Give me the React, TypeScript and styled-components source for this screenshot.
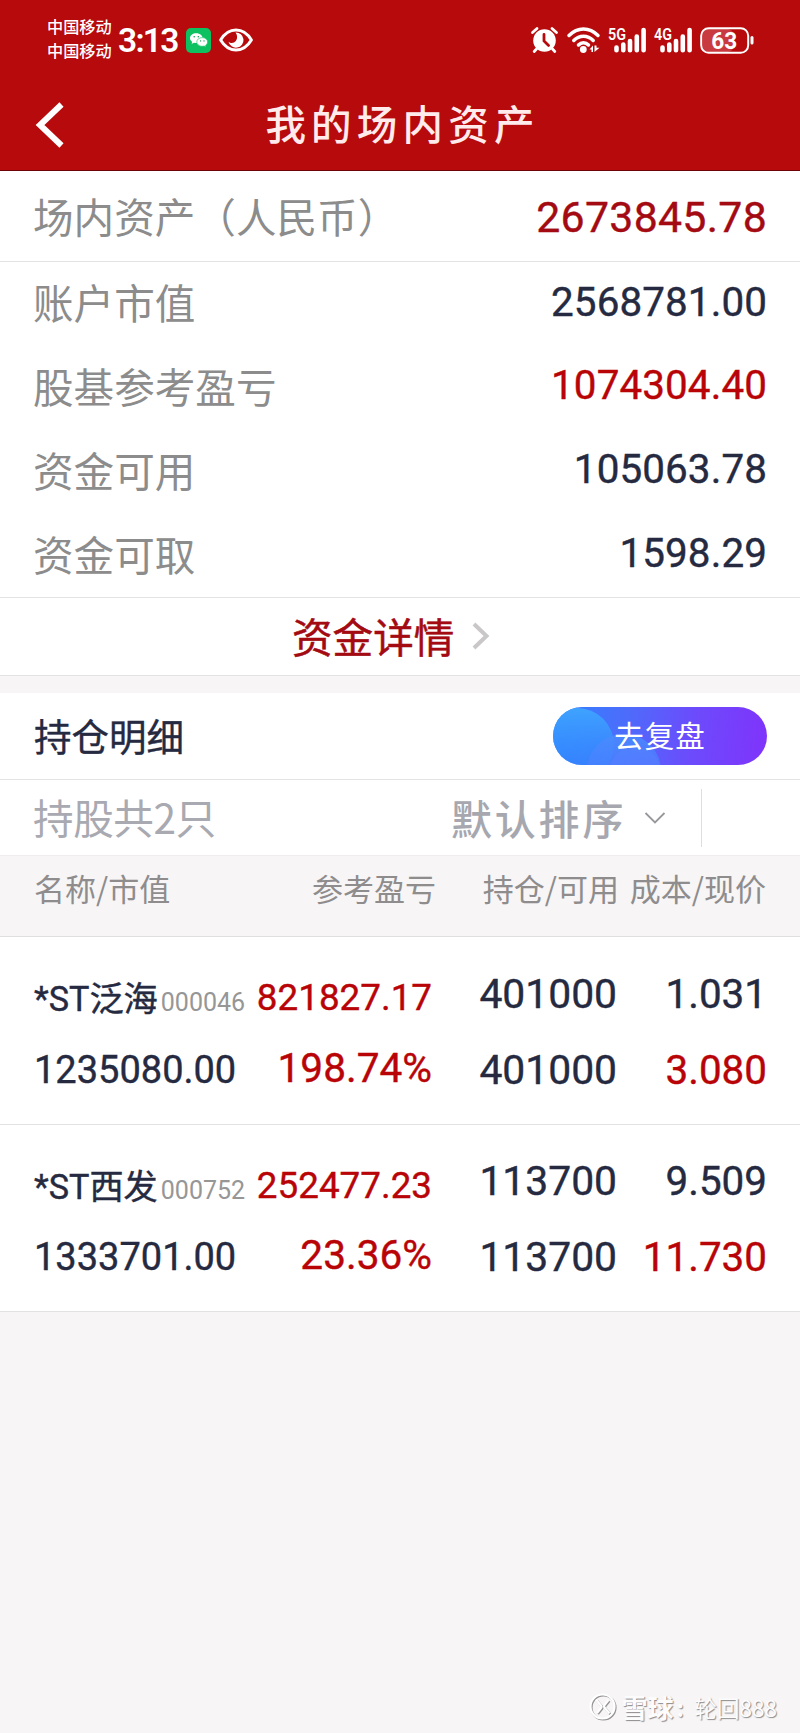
import React from "react";
import styled, { createGlobalStyle } from "styled-components";

const CJK = `"Noto Sans CJK SC", sans-serif`;
const DIGITS = `Roboto, "Noto Sans CJK SC", sans-serif`;

const INK = "#252a41";
const RED = "#b80407";
const DEEP_RED = "#a30a12";
const GREY = "#8c8c8c";

const GlobalStyle = createGlobalStyle`
  * { box-sizing: border-box; }
  body { margin: 0; background: #f7f5f6; font-family: ${CJK}; }
`;

const Screen = styled.main`
  width: 800px;
  height: 1733px;
  display: flex;
  flex-direction: column;
  overflow: hidden;
  background: #f7f5f6;
`;

const Top = styled.header`
  height: 171px;
  flex: none;
  background: #b60a0c;
  border-bottom: 1px solid #6d0208;
  color: #fff;
`;

const StatusBar = styled.div`
  height: 80px;
  padding: 0 46px 0 47px;
  display: flex;
  justify-content: space-between;
  align-items: center;
`;

const StatusGroup = styled.div`
  display: flex;
  align-items: center;
`;

const Carriers = styled.div`
  font-size: 16.2px;
  font-weight: 500;
  line-height: 24px;
  padding-bottom: 5px;
  width: 71px;
  white-space: nowrap;
`;

const Clock = styled.div`
  font-family: ${DIGITS};
  font-weight: 600;
  font-size: 33.5px;
  line-height: 40px;
  width: 68px;
  white-space: nowrap;
  letter-spacing: -1.7px;
  padding-top: 1px;
`;

const Icon = styled.svg<{ $gap?: number }>`
  display: block;
  flex: none;
  overflow: visible;
  margin-left: ${(p) => p.$gap ?? 0}px;
`;

const NavBar = styled.div`
  height: 90px;
  display: grid;
  grid-template-columns: 120px 1fr 120px;
  align-items: center;
`;

const BackButton = styled.button`
  border: 0;
  background: none;
  padding: 0 0 0 36px;
  height: 88px;
  display: flex;
  align-items: center;
`;

const Title = styled.h1`
  margin: 0;
  font-size: 40.5px;
  font-weight: 500;
  line-height: 60px;
  letter-spacing: 5.2px;
  text-align: center;
  color: #ffebec;
  padding: 0 0 4px 5px;
`;

const Panel = styled.section`
  background: #fff;
  border-bottom: 1px solid #e3e3e4;
  flex: none;
`;

const SummaryRow = styled.div<{ $height: number; $lift?: number }>`
  height: ${(p) => p.$height}px;
  padding: 0 33px ${(p) => p.$lift ?? 0}px 33px;
  display: flex;
  justify-content: space-between;
  align-items: center;
`;

const Label = styled.span`
  font-size: 40.6px;
  line-height: 60px;
  color: ${GREY};
`;

const Num = styled.span<{ $size: number; $color?: string; $track?: number; $drop?: number }>`
  font-family: ${DIGITS};
  font-size: ${(p) => p.$size}px;
  font-weight: 400;
  letter-spacing: ${(p) => p.$track ?? 0}px;
  color: ${(p) => p.$color ?? INK};
  -webkit-text-stroke: 0.4px currentColor;
  white-space: nowrap;
  line-height: 1.2;
  padding-top: ${(p) => p.$drop ?? 0}px;
`;

const DetailLink = styled.a`
  height: 77px;
  display: flex;
  align-items: center;
  padding-left: 292px;
  font-size: 40.6px;
  -webkit-text-stroke: 0.5px currentColor;
  line-height: 60px;
  color: ${DEEP_RED};
  padding-bottom: 2px;
`;

const Gap = styled.div`
  height: 17px;
  flex: none;
`;

const SectionHead = styled.div`
  height: 86px;
  padding: 0 33px 0 34px;
  display: flex;
  align-items: center;
  justify-content: space-between;
`;

const SectionTitle = styled.h2`
  margin: 0;
  font-size: 37.5px;
  line-height: 54px;
  font-weight: 400;
  -webkit-text-stroke: 0.4px currentColor;
  color: ${INK};
  padding-bottom: 3px;
`;

const ReviewButton = styled.button`
  position: relative;
  width: 214px;
  height: 58px;
  border: 0;
  padding: 0;
  border-radius: 29px;
  overflow: hidden;
  background: linear-gradient(95deg, #2f83ff 0%, #4d6cfb 34%, #6c4bfc 65%, #8033fb 100%);
  color: #fff;
`;

const Bubbles = styled.svg`
  position: absolute;
  inset: 0;
`;

const ReviewText = styled.span`
  position: relative;
  display: block;
  font-family: ${CJK};
  font-size: 29.5px;
  line-height: 54px;
  padding-bottom: 4px;
  letter-spacing: 1px;
`;

const SortBar = styled.div`
  height: 75px;
  background: #fff;
  flex: none;
  padding-left: 33px;
  display: flex;
  align-items: center;
`;

const Count = styled.span`
  width: 418px;
  font-size: 40.6px;
  letter-spacing: -0.4px;
  line-height: 60px;
  color: #a9a9b1;
  padding-bottom: 1px;
`;

const SortPicker = styled.div`
  width: 251px;
  height: 58px;
  display: flex;
  align-items: center;
  font-size: 41px;
  font-weight: 500;
  letter-spacing: 2.8px;
  line-height: 56px;
  color: #a7a7af;
  border-right: 1px solid #dedede;
  padding-bottom: 2px;
`;

const TableHead = styled.div`
  display: grid;
  grid-template-columns: 213px 189px 183px 147px;
  padding: 0 34px;
  height: 82px;
  flex: none;
  border-top: 1px solid #efedee;
  border-bottom: 1px solid #dfdfe0;
  font-size: 31px;
  line-height: 64px;
  color: #8e8c8d;
  white-space: nowrap;
`;

const HeadCell = styled.span<{ $right?: boolean }>`
  display: flex;
  justify-content: ${(p) => (p.$right ? "flex-end" : "flex-start")};
`;

const Holding = styled.div`
  display: grid;
  grid-template-columns: 213px 186px 184px 150px;
  padding: 0 33px 0 34px;
  height: 187.5px;
  flex: none;
  background: #fff;
  border-bottom: 1px solid #e2e2e3;
`;

const Cells = styled.div<{ $top: number; $line: number; $inset?: number; $right?: boolean }>`
  display: grid;
  grid-template-rows: ${(p) => p.$line}px ${(p) => p.$line}px;
  align-content: start;
  align-items: center;
  justify-items: ${(p) => (p.$right ? "end" : "start")};
  padding-top: ${(p) => p.$top}px;
  padding-right: ${(p) => p.$inset ?? 0}px;
`;

const Stock = styled.div`
  display: flex;
  align-items: baseline;
  font-size: 34.2px;
  line-height: 50px;
  color: ${INK};
  -webkit-text-stroke: 0.4px currentColor;
  white-space: nowrap;
`;

const Prefix = styled.span`
  font-family: ${DIGITS};
`;

const Code = styled.span`
  font-family: ${DIGITS};
  font-size: 25px;
  margin-left: 3px;
  color: #969696;
  -webkit-text-stroke: 0;
`;

const Watermark = styled.footer`
  margin-top: auto;
  height: 52px;
  padding-right: 23px;
  display: flex;
  justify-content: flex-end;
  align-items: center;
  font-size: 22.5px;
  line-height: 30px;
  color: #fdfcfd;
  text-shadow: 1px 1px 1px #8d8b8c;
`;

const Brand = styled.span`
  font-weight: 700;
  font-size: 26px;
  margin-left: 5px;
`;

const Colon = styled.span`
  width: 21px;
  padding-left: 3px;
  font-weight: 700;
`;

const summary = [
  { label: "账户市值", value: "2568781.00" },
  { label: "股基参考盈亏", value: "1074304.40", color: RED },
  { label: "资金可用", value: "105063.78" },
  { label: "资金可取", value: "1598.29" },
];

const holdings = [
  { name: "泛海", code: "000046", value: "1235080.00", pnl: "821827.17", pct: "198.74%", pos: "401000", avail: "401000", cost: "1.031", price: "3.080" },
  { name: "西发", code: "000752", value: "1333701.00", pnl: "252477.23", pct: "23.36%", pos: "113700", avail: "113700", cost: "9.509", price: "11.730" },
];

const Signal = ({ label }: { label: string }) => (
  <Icon $gap={9} width="37" height="26" viewBox="0 0 37 26">
    <text x="-1" y="12.500" fontFamily="Roboto" fontWeight="600" fontSize="16.500" textLength="18" lengthAdjust="spacingAndGlyphs" fill="#fff">{label}</text>
    <g stroke="#fff" strokeWidth="4.600" strokeLinecap="round">
      <path d="M7.500 20.500V23.200M14.300 17.500V23.200M21 14V23.200M27.800 9.500V23.200M34.600 3V23.200" />
    </g>
  </Icon>
);

export default function App() {
  return (
    <Screen>
      <GlobalStyle />
      <Top>
        <StatusBar>
          <StatusGroup>
            <Carriers>
              <div>中国移动</div>
              <div>中国移动</div>
            </Carriers>
            <Clock>3:13</Clock>
            <Icon width="25" height="25" viewBox="0 0 25 25">
              <rect width="25" height="25" rx="5" fill="#0bc160" />
              <path d="M10.3 5.2c-3.6 0-6.300 2.100-6.300 4.900 0 1.600.9 2.900 2.200 3.800l-.6 2 2.300-1.200c.8.2 1.600.3 2.400.3 3.600 0 6.300-2.200 6.300-4.900s-2.700-4.900-6.300-4.900z" fill="#fff" />
              <path d="M16.200 9.600c-3.100 0-5.400 1.900-5.400 4.300s2.300 4.400 5.400 4.400c.7 0 1.400-.1 2-.3l1.900 1-.5-1.700c1.200-.8 2-2 2-3.400 0-2.400-2.400-4.300-5.400-4.300z" fill="#fff" stroke="#0bc160" strokeWidth=".6" />
              <circle cx="8.200" cy="8.800" r=".8" fill="#0a9c4f" />
              <circle cx="12.300" cy="8.800" r=".8" fill="#0a9c4f" />
              <circle cx="14.500" cy="12.900" r=".7" fill="#0a9c4f" />
              <circle cx="18" cy="12.900" r=".7" fill="#0a9c4f" />
            </Icon>
            <Icon $gap={8} width="34" height="24" viewBox="0 0 34 24">
              <path d="M1.600 12C5.500 5.500 11 2 17 2s11.500 3.500 15.400 10C28.500 18.500 23 22 17 22S5.500 18.500 1.600 12z" fill="none" stroke="#fff" strokeWidth="3" strokeLinejoin="round" />
              <path d="M16.500 4.500a7.600 7.600 0 1 1-7 9.200c2 1.800 5.500 1.700 7.300-.7 2-2.700 1.700-6-.3-8.500z" fill="#fff" />
            </Icon>
          </StatusGroup>
          <StatusGroup>
            <Icon width="27" height="26" viewBox="0 0 27 26">
              <circle cx="13.500" cy="13.500" r="11.300" fill="#fff" />
              <path d="M1.500 5.500 6 1.500M25.500 5.500 21 1.500M5.500 22l-2.300 2.500M21.500 22l2.300 2.500" stroke="#fff" strokeWidth="2.800" strokeLinecap="round" />
              <path d="M13 7.500v6.500l4.600 4.400" fill="none" stroke="#b60a0c" strokeWidth="2.800" strokeLinecap="round" />
            </Icon>
            <Icon $gap={9} width="33" height="26" viewBox="0 0 33 26">
              <g fill="none" stroke="#fff" strokeWidth="3.500" strokeLinecap="round">
                <path d="M2 8.500C10.500-.2 22.500-.2 31 8.500" />
                <path d="M6.800 13.500c5.600-5.700 13.800-5.700 19.400 0" />
                <path d="M11.500 18c2.800-3 7.200-3 10 0" />
              </g>
              <circle cx="16.300" cy="22.500" r="3.400" fill="#fff" />
              <path d="m26 18.500-3.500 4h2v2.500H26zM27.500 18.500v6.500l5-4.200h-3v-2.300z" fill="#fff" />
            </Icon>
            <Signal label="5G" />
            <Signal label="4G" />
            <Icon $gap={8} width="54" height="27" viewBox="0 0 54 27">
              <rect x="2.500" y="2" width="31" height="23" rx="6" fill="#c93a40" />
              <rect x="1.200" y="1.200" width="47" height="24.600" rx="7.500" fill="none" stroke="#fff" strokeWidth="2" />
              <path d="M52 10.500v5.500" stroke="#fff" strokeWidth="3" strokeLinecap="round" />
              <text x="24.300" y="22" textAnchor="middle" fontFamily="Roboto" fontWeight="700" fontSize="24" textLength="26" lengthAdjust="spacingAndGlyphs" fill="#fff">63</text>
            </Icon>
          </StatusGroup>
        </StatusBar>
        <NavBar>
          <BackButton aria-label="返回">
            <Icon width="29" height="46" viewBox="0 0 29 46">
              <path d="M25.500 2.500 4 23l21.500 20.500" fill="none" stroke="#fff" strokeWidth="6" />
            </Icon>
          </BackButton>
          <Title>我的场内资产</Title>
        </NavBar>
      </Top>

      <Panel>
        <SummaryRow $height={90}>
          <Label>场内资产（人民币）</Label>
          <Num $size={42.8} $color={DEEP_RED} $track={0.3} $drop={4}>2673845.78</Num>
        </SummaryRow>
      </Panel>
      <Panel>
        {summary.map((r) => (
          <SummaryRow key={r.label} $height={83.75} $lift={3}>
            <Label>{r.label}</Label>
            <Num $size={40.4} $color={r.color} $track={0.1} $drop={1}>{r.value}</Num>
          </SummaryRow>
        ))}
      </Panel>
      <Panel>
        <DetailLink>
          资金详情
          <Icon $gap={18} width="18" height="28" viewBox="0 0 18 28">
            <path d="M2 2l12.500 12L2 26" fill="none" stroke="#c9c7c8" strokeWidth="4" />
          </Icon>
        </DetailLink>
      </Panel>
      <Gap />
      <Panel>
        <SectionHead>
          <SectionTitle>持仓明细</SectionTitle>
          <ReviewButton>
            <Bubbles width="214" height="58" viewBox="0 0 214 58">
              <defs>
                <linearGradient id="b1" x1="0" y1="0" x2="0" y2="1">
                  <stop offset="0" stopColor="#3fa3ff" />
                  <stop offset="1" stopColor="#2f7fff" stopOpacity=".5" />
                </linearGradient>
                <linearGradient id="b2" x1="0" y1="0" x2="0" y2="1">
                  <stop offset="0" stopColor="#4a8bff" stopOpacity=".9" />
                  <stop offset=".6" stopColor="#4a7dff" stopOpacity=".5" />
                </linearGradient>
              </defs>
              <circle cx="24" cy="38" r="37" fill="url(#b1)" />
              <circle cx="71" cy="64" r="37" fill="url(#b2)" />
              <circle cx="82" cy="66" r="26" fill="#5b84ff" opacity=".35" />
            </Bubbles>
            <ReviewText>去复盘</ReviewText>
          </ReviewButton>
        </SectionHead>
      </Panel>
      <SortBar>
        <Count>持股共2只</Count>
        <SortPicker>
          默认排序
          <Icon $gap={18} width="22" height="14" viewBox="0 0 22 14">
            <path d="M1.500 3l9.500 9.500L20.500 3" fill="none" stroke="#97979c" strokeWidth="1.800" />
          </Icon>
        </SortPicker>
      </SortBar>
      <TableHead>
        <HeadCell>名称/市值</HeadCell>
        <HeadCell $right>参考盈亏</HeadCell>
        <HeadCell $right>持仓/可用</HeadCell>
        <HeadCell $right>成本/现价</HeadCell>
      </TableHead>
      {holdings.map((h) => (
        <Holding key={h.code}>
          <Cells $top={27} $line={71}>
            <Stock>
              <Prefix>*ST</Prefix>
              {h.name}
              <Code>{h.code}</Code>
            </Stock>
            <Num $size={38}>{h.value}</Num>
          </Cells>
          <Cells $top={26} $line={70} $right $inset={1}>
            <Num $size={36.8} $color={RED} $drop={1}>{h.pnl}</Num>
            <Num $size={40.6} $color={RED}>{h.pct}</Num>
          </Cells>
          <Cells $top={19} $line={76} $right>
            <Num $size={40.8}>{h.pos}</Num>
            <Num $size={40.8}>{h.avail}</Num>
          </Cells>
          <Cells $top={20} $line={76} $right>
            <Num $size={40.4}>{h.cost}</Num>
            <Num $size={40.4} $color={RED}>{h.price}</Num>
          </Cells>
        </Holding>
      ))}
      <Watermark>
        <Icon width="28" height="28" viewBox="0 0 28 28">
          <g fill="none" strokeWidth="2.200">
            <g stroke="#959394" transform="translate(1 1)">
              <circle cx="13.500" cy="13.500" r="12" />
              <path d="M7 6.500l5 6c.8 1 .8 1.600 0 2.500l-4 5M20.500 20.500l-5-6c-.8-1-.8-1.600 0-2.500l4-5" />
            </g>
            <g stroke="#fff">
              <circle cx="13.500" cy="13.500" r="12" />
              <path d="M7 6.500l5 6c.8 1 .8 1.600 0 2.500l-4 5M20.500 20.500l-5-6c-.8-1-.8-1.600 0-2.500l4-5" />
            </g>
          </g>
        </Icon>
        <Brand>雪球</Brand>
        <Colon>:</Colon>
        <span>轮回888</span>
      </Watermark>
    </Screen>
  );
}
